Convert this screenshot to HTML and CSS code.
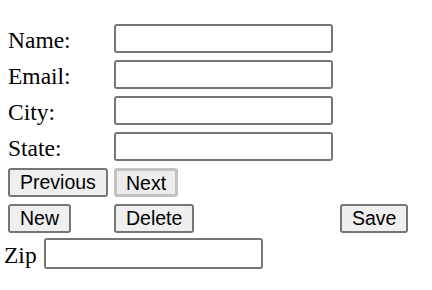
FILE: index.html
```html
<!DOCTYPE html>
<html>
<head>
<meta charset="utf-8">
<link rel="stylesheet" href="styles.css">
</head>
<body>
<div class="page">
  <div class="grid">
    <label class="lbl">Name:</label><input class="field" type="text"><span></span>
    <label class="lbl">Email:</label><input class="field" type="text"><span></span>
    <label class="lbl">City:</label><input class="field" type="text"><span></span>
    <label class="lbl">State:</label><input class="field" type="text"><span></span>
    <div><button class="btn" type="button">Previous</button></div><div><button class="btn btn-hover" type="button">Next</button></div><span></span>
    <div><button class="btn" type="button">New</button></div><div><button class="btn" type="button">Delete</button></div><div><button class="btn" type="button">Save</button></div>
  </div>
  <div class="zip">
    <label class="lbl">Zip</label><input class="field" type="text">
  </div>
</div>
</body>
</html>
```

FILE: styles.css
```css
html, body {
  margin: 0;
  padding: 0;
  background: #ffffff;
}
.page {
  padding: 24px 0 0 4px;
  font-family: "Liberation Serif", "Times New Roman", serif;
  color: #000;
}
.grid {
  margin-left: 4px;
  display: grid;
  grid-template-columns: 106px 226px auto;
  row-gap: 7px;
  align-items: center;
}
.lbl {
  font-size: 23.5px;
  line-height: 29px;
  padding-top: 2px;
  height: 29px;
  box-sizing: border-box;
}
.field {
  display: block;
  width: 219px;
  height: 29px;
  box-sizing: border-box;
  margin: 0;
  padding: 0 4px;
  border: 2px solid #767676;
  border-radius: 3px;
  background: #fff;
  font-family: "Liberation Sans", Arial, sans-serif;
  font-size: 18px;
}
.btn {
  display: block;
  height: 29px;
  box-sizing: border-box;
  margin: 0;
  padding: 0 10px;
  border: 2px solid #767676;
  border-radius: 3px;
  background: #efefef;
  color: #000;
  font-family: "Liberation Sans", Arial, sans-serif;
  font-size: 19.5px;
  line-height: 25px;
}
.btn-hover {
  border-color: #c2c2c2;
  border-width: 3px;
  padding: 0 9px;
  background: #ececec;
}
.zip {
  display: flex;
  align-items: center;
  gap: 7px;
  margin-top: 5px;
}
.zip .field {
  height: 31px;
}
```
